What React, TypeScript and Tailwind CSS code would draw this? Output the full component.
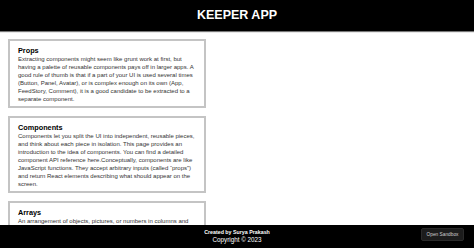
import React from "react";

const notes = [
  {
    title: "Props",
    content:
      "Extracting components might seem like grunt work at first, but having a palette of reusable components pays off in larger apps. A good rule of thumb is that if a part of your UI is used several times (Button, Panel, Avatar), or is complex enough on its own (App, FeedStory, Comment), it is a good candidate to be extracted to a separate component.",
  },
  {
    title: "Components",
    content:
      "Components let you split the UI into independent, reusable pieces, and think about each piece in isolation. This page provides an introduction to the idea of components. You can find a detailed component API reference here.Conceptually, components are like JavaScript functions. They accept arbitrary inputs (called “props”) and return React elements describing what should appear on the screen.",
  },
  {
    title: "Arrays",
    content:
      "An arrangement of objects, pictures, or numbers in columns and rows is called an array. Arrays are useful representations of multiplication concepts.",
  },
];

export default function App() {
  return (
    <div
      className="min-h-[248px] bg-white"
      style={{ fontFamily: '"Liberation Sans", Arial, sans-serif' }}
    >
      <header className="h-[31px] bg-black flex items-center justify-center shadow-[0_1px_1px_#777]">
        <h1 className="text-white font-bold text-[12.5px] leading-none">KEEPER APP</h1>
      </header>
      <main className="flex flex-col gap-[8px] pt-[8px] pl-[8px] pb-[30px]">
        {notes.map((n) => (
          <div
            key={n.title}
            className="w-[198px] border-2 border-[#c4c4c4] bg-white pt-[5px] pb-[3px] pl-[8px] pr-[5px]"
          >
            <h2 className="text-[7.3px] leading-[9px] font-bold text-black">{n.title}</h2>
            <p className="text-[6px] leading-[8px] text-[#333]">{n.content}</p>
          </div>
        ))}
      </main>
      <footer className="fixed bottom-0 inset-x-0 h-[23px] bg-black flex items-center justify-center">
        <div className="flex flex-col items-center text-white">
          <span className="text-[5.3px] leading-[7px] font-bold">Created by Surya Prakash</span>
          <span className="text-[6.3px] leading-[8px]">Copyright © 2023</span>
        </div>
        <div className="absolute right-[10px] top-[3px] h-[13px] w-[43px] rounded-[2px] bg-[#1c1c1c] border border-[#2a2a2a] flex items-center justify-center text-[4.8px] text-[#cfcfcf]">
          Open Sandbox
        </div>
      </footer>
    </div>
  );
}
